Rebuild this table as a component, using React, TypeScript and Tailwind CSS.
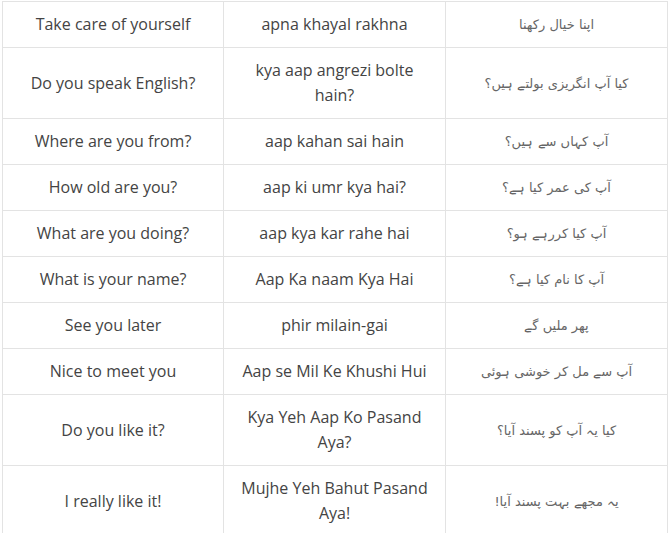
const rows: { en: string; roman: string; urdu: string }[] = [
  { en: 'Take care of yourself', roman: 'apna khayal rakhna', urdu: 'اپنا خیال رکھنا' },
  { en: 'Do you speak English?', roman: 'kya aap angrezi bolte hain?', urdu: 'کیا آپ انگریزی بولتے ہیں؟' },
  { en: 'Where are you from?', roman: 'aap kahan sai hain', urdu: 'آپ کہاں سے ہیں؟' },
  { en: 'How old are you?', roman: 'aap ki umr kya hai?', urdu: 'آپ کی عمر کیا ہے؟' },
  { en: 'What are you doing?', roman: 'aap kya kar rahe hai', urdu: 'آپ کیا کررہے ہو؟' },
  { en: 'What is your name?', roman: 'Aap Ka naam Kya Hai', urdu: 'آپ کا نام کیا ہے؟' },
  { en: 'See you later', roman: 'phir milain-gai', urdu: 'پھر ملیں گے' },
  { en: 'Nice to meet you', roman: 'Aap se Mil Ke Khushi Hui', urdu: 'آپ سے مل کر خوشی ہوئی' },
  { en: 'Do you like it?', roman: 'Kya Yeh Aap Ko Pasand Aya?', urdu: 'کیا یہ آپ کو پسند آیا؟' },
  { en: 'I really like it!', roman: 'Mujhe Yeh Bahut Pasand Aya!', urdu: 'یہ مجھے بہت پسند آیا!' },
];

const cell = 'border border-[#e3e3e3] px-[14px] py-[10px] text-center align-middle leading-[25px]';

export default function App() {
  return (
    <div className="bg-white h-[533px] overflow-hidden pl-[2px] pt-px">
      <table className="w-[665px] table-fixed border-collapse font-['Open_Sans',sans-serif] text-[16px] text-[#444]">
        <colgroup>
          <col className="w-[221px]" />
          <col className="w-[222px]" />
          <col className="w-[222px]" />
        </colgroup>
        <tbody>
          {rows.map((r) => (
            <tr key={r.en}>
              <td className={cell}>{r.en}</td>
              <td className={cell}>{r.roman}</td>
              <td dir="rtl" className={`${cell} font-['DejaVu_Sans',sans-serif] text-[13px] text-[#666]`}>
                {r.urdu}
              </td>
            </tr>
          ))}
        </tbody>
      </table>
    </div>
  );
}
